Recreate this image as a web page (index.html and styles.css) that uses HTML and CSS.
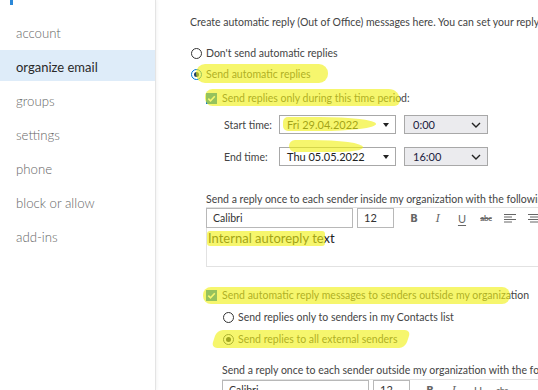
FILE: index.html
```html
<!DOCTYPE html>
<html lang="en">
<head>
<meta charset="utf-8">
<title>Automatic replies</title>
<link rel="stylesheet" href="styles.css">
</head>
<body>
<div class="app">
  <aside class="nav">
    <div class="mark"></div>
    <ul class="nav-list">
      <li class="nav-item">account</li>
      <li class="nav-item is-active">organize email</li>
      <li class="nav-item">groups</li>
      <li class="nav-item">settings</li>
      <li class="nav-item">phone</li>
      <li class="nav-item">block or allow</li>
      <li class="nav-item">add-ins</li>
    </ul>
  </aside>

  <main class="content">
    <p class="intro">Create automatic reply (Out of Office) messages here. You can set your reply to start at a specific time, or set it to continue until you turn it off.</p>

    <div class="row row-r1">
      <span class="radio"></span><span class="label">Don't send automatic replies</span>
    </div>
    <div class="row row-r2">
      <span class="radio is-on"></span><span class="label">Send automatic replies</span>
      <span class="mark-hl hl-1"></span>
    </div>
    <div class="row row-c1">
      <span class="check"><svg viewBox="0 0 11 11" width="11" height="11"><path d="M2.3 5.6 L4.5 7.8 L8.8 3.2" fill="none" stroke="#fff" stroke-width="1.6"/></svg></span>
      <span class="label">Send replies only during this time period:</span>
      <span class="mark-hl hl-2"></span>
    </div>

    <div class="time-row row-start">
      <span class="time-label">Start time:</span>
      <span class="date-box"><span class="date-text">Fri 29.04.2022</span><span class="tri"></span></span>
      <span class="time-box"><span>0:00</span><svg class="chev" viewBox="0 0 10 6" width="10" height="6"><path d="M1 1 L5 5 L9 1" fill="none" stroke="#222" stroke-width="1.4"/></svg></span>
      <span class="mark-hl hl-3"></span>
    </div>
    <div class="time-row row-end">
      <span class="time-label">End time:</span>
      <span class="date-box"><span class="date-text">Thu 05.05.2022</span><span class="tri"></span></span>
      <span class="time-box"><span>16:00</span><svg class="chev" viewBox="0 0 10 6" width="10" height="6"><path d="M1 1 L5 5 L9 1" fill="none" stroke="#222" stroke-width="1.4"/></svg></span>
      <span class="mark-hl hl-4"></span>
    </div>

    <p class="hint hint-in">Send a reply once to each sender inside my organization with the following message:</p>
    <div class="editor editor-in">
      <div class="toolbar">
        <span class="font-box">Calibri</span>
        <span class="size-box">12</span>
        <span class="tool tool-b">B</span>
        <span class="tool tool-i">I</span>
        <span class="tool tool-u">U</span>
        <span class="tool tool-s">abc</span>
        <span class="tool"><svg viewBox="0 0 12 10" width="12" height="10"><path d="M0 1.5H12M0 4H8M0 6.5H12M0 9H8" stroke="#666" stroke-width="1"/></svg></span>
        <span class="tool"><svg viewBox="0 0 12 10" width="12" height="10"><path d="M0 1.5H12M2 4H10M0 6.5H12M2 9H10" stroke="#666" stroke-width="1"/></svg></span>
      </div>
      <div class="editor-body">
        <span class="body-text">Internal autoreply text</span>
        <span class="mark-hl hl-5"></span>
      </div>
    </div>

    <div class="row row-c2">
      <span class="check"><svg viewBox="0 0 11 11" width="11" height="11"><path d="M2.3 5.6 L4.5 7.8 L8.8 3.2" fill="none" stroke="#fff" stroke-width="1.6"/></svg></span>
      <span class="label">Send automatic reply messages to senders outside my organization</span>
      <span class="mark-hl hl-6"></span>
    </div>
    <div class="row row-r3">
      <span class="radio"></span><span class="label">Send replies only to senders in my Contacts list</span>
    </div>
    <div class="row row-r4">
      <span class="radio is-on dark"></span><span class="label">Send replies to all external senders</span>
      <span class="mark-hl hl-7"></span>
    </div>

    <p class="hint hint-out">Send a reply once to each sender outside my organization with the following message:</p>
    <div class="editor editor-out">
      <div class="toolbar">
        <span class="font-box">Calibri</span>
        <span class="size-box">12</span>
        <span class="tool tool-b">B</span>
        <span class="tool tool-i">I</span>
        <span class="tool tool-u">U</span>
        <span class="tool tool-s">abc</span>
      </div>
    </div>
  </main>
</div>
</body>
</html>
```

FILE: styles.css
```css
html, body {
  margin: 0;
  padding: 0;
  width: 538px;
  height: 390px;
  overflow: hidden;
  background: #fff;
}

.app {
  display: flex;
  height: 390px;
  font-family: "Lato", "Liberation Sans", sans-serif;
  color: #444;
}

/* ---------- left nav ---------- */
.nav {
  width: 155px;
  flex: none;
  border-right: 1px solid #e4e4e4;
  box-shadow: 1px 0 3px rgba(0, 0, 0, 0.05);
}

.mark {
  width: 3px;
  height: 5px;
  margin-left: 10px;
  background: #2b88d8;
}

.nav-list {
  list-style: none;
  margin: 11px 0 0;
  padding: 0;
}

.nav-item {
  box-sizing: border-box;
  height: 31px;
  margin-bottom: 3px;
  padding: 3px 0 0 16px;
  line-height: 28px;
  font-size: 13.2px;
  font-weight: 300;
  color: #666;
}

.nav-item.is-active {
  background: #deecf9;
  color: #2a2a2a;
  font-weight: 400;
  font-size: 13px;
}

/* ---------- main ---------- */
.content {
  flex: 1;
  min-width: 0;
  padding-left: 34px;
  overflow: hidden;
  white-space: nowrap;
  font-size: 10.5px;
}

.intro {
  margin: 14px 0 0;
  line-height: 16px;
  color: #444;
}

.row {
  position: relative;
  display: flex;
  align-items: center;
  height: 20px;
}

.row-r1 { margin-top: 13px; }
.row-r2 { margin-top: 1px; }
.row-c1 { margin-top: 4px; padding-left: 16px; }
.row-c2 { margin-top: 18px; padding-left: 16px; }
.row-r3 { margin-top: 2px; padding-left: 32px; }
.row-r4 { margin-top: 2px; padding-left: 32px; }

.radio {
  box-sizing: border-box;
  width: 11px;
  height: 11px;
  margin-left: 1px;
  margin-right: 4px;
  border: 1px solid #333;
  border-radius: 50%;
  flex: none;
  display: flex;
  align-items: center;
  justify-content: center;
}

.radio.is-on {
  border: 1.5px solid #0078d4;
}

.radio.is-on::before {
  content: "";
  width: 5px;
  height: 5px;
  border-radius: 50%;
  background: #1f3f66;
}

.radio.dark {
  border-color: #3a4a5a;
}

.radio.dark::before {
  background: #1e2b36;
}

.check {
  width: 11px;
  height: 11px;
  margin-right: 5px;
  background: #0078d4;
  flex: none;
  display: flex;
}

.label {
  color: #444;
}

/* ---------- time rows ---------- */
.time-row {
  position: relative;
  display: flex;
  align-items: center;
  height: 19px;
  padding-left: 34px;
}

.row-start { margin-top: 7px; }
.row-end { margin-top: 13px; }

.time-label {
  width: 55px;
  flex: none;
  color: #444;
}

.date-box {
  box-sizing: border-box;
  width: 117px;
  height: 19px;
  flex: none;
  border: 1px solid #a8a8a8;
  background: #fff;
  display: flex;
  align-items: center;
  justify-content: space-between;
  padding: 0 6px 0 7px;
  color: #222;
  font-size: 11px;
}

.tri {
  width: 0;
  height: 0;
  border-left: 3.5px solid transparent;
  border-right: 3.5px solid transparent;
  border-top: 4px solid #222;
}

.time-box {
  box-sizing: border-box;
  width: 84px;
  height: 19px;
  flex: none;
  margin-left: 8px;
  border: 1px solid #a8a8a8;
  background: #ebebee;
  display: flex;
  align-items: center;
  justify-content: space-between;
  padding: 0 6px 0 8px;
  color: #1b2240;
  font-size: 11px;
}

/* ---------- editor ---------- */
.hint {
  margin: 25px 0 0 16px;
  line-height: 16px;
  color: #444;
}

.hint-out {
  margin: 13px 0 0 32px;
}

.editor {
  margin-left: 16px;
  border: 1px solid #e2e2e2;
  border-right: none;
  height: 58px;
}

.editor-out {
  margin-left: 32px;
  margin-top: 1px;
}

.toolbar {
  display: flex;
  align-items: center;
  height: 20px;
}

.font-box,
.size-box {
  box-sizing: border-box;
  flex: none;
  height: 20px;
  border: 1px solid #b8b8b8;
  background: #fff;
  display: flex;
  align-items: center;
  padding-left: 6px;
  color: #333;
  font-size: 10.5px;
}

.font-box { width: 147px; margin-left: -1px; margin-top: -1px; }
.size-box { width: 37px; margin-left: 4px; margin-top: -1px; font-size: 11px; }

.tool {
  width: 24px;
  flex: none;
  display: flex;
  justify-content: center;
  align-items: center;
  color: #666;
  font-size: 11px;
}

.size-box + .tool { margin-left: 8px; }

.tool-b { font-family: "DejaVu Sans", sans-serif; font-weight: bold; font-size: 10px; }
.tool-i { font-family: "DejaVu Serif", serif; font-style: italic; font-size: 11px; }
.tool-u { text-decoration: underline; text-underline-offset: 2px; font-size: 11px; }
.tool-s { font-size: 8px; font-weight: bold; text-decoration: line-through; letter-spacing: -0.3px; }

.editor-body {
  position: relative;
  padding: 1px 0 0 1px;
  height: 37px;
}

.body-text {
  font-size: 13px;
  line-height: 18px;
  color: #222;
}

/* ---------- marker highlights (drawn over the content) ---------- */
.mark-hl {
  position: absolute;
  background: rgba(240, 240, 20, 0.62);
  border-radius: 9px;
  pointer-events: none;
}

.hl-1 { left: 6px; top: 0; width: 132px; height: 19px; }
.hl-2 { left: 15px; top: 1px; width: 195px; height: 17px; border-radius: 8px 12px 6px 8px; }
.hl-3 { left: 93px; top: 2px; width: 93px; height: 14px; border-radius: 5px 60% 60% 5px / 5px 50% 50% 5px; }
.hl-4 { left: 99px; top: -7px; width: 74px; height: 12px; border-radius: 6px 70% 30% 6px / 6px 60% 40% 6px; }
.hl-5 { left: 0; top: 3px; width: 118px; height: 15px; border-radius: 3px; }
.hl-6 { left: 13px; top: 2px; width: 307px; height: 17px; border-radius: 8px; }
.hl-7 { left: 24px; top: 1px; width: 194px; height: 18px; border-radius: 6px; transform: skewX(-18deg); }
```
